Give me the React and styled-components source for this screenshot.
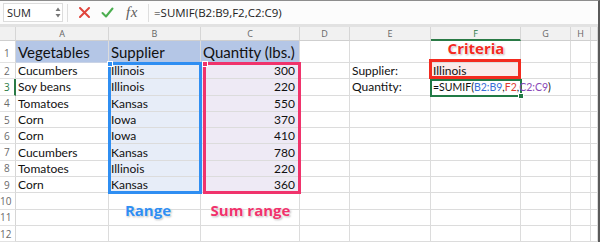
import React from 'react';
import styled, { createGlobalStyle, css } from 'styled-components';

const GlobalStyle = createGlobalStyle`
  html, body {
    margin: 0;
    padding: 0;
    background: #ffffff;
  }
  body {
    width: 600px;
    height: 242px;
    overflow: hidden;
    font-family: Lato, 'Open Sans', sans-serif;
  }
`;

const Frame = styled.div`
  width: 600px;
  height: 242px;
  box-sizing: border-box;
  border-top: 1px solid #8d8d8d;
  border-right: 2px solid #5a5a5a;
  display: flex;
  flex-direction: column;
  overflow: hidden;
`;

const Toolbar = styled.div`
  height: 23px;
  flex: none;
  display: flex;
  align-items: center;
  background: #fcfcfc;
  border-bottom: 3px solid #e2e2e2;
  padding-left: 3px;
`;

const NameBox = styled.div`
  width: 60px;
  height: 19px;
  box-sizing: border-box;
  border: 1px solid #dcdcdc;
  background: #ffffff;
  display: flex;
  align-items: center;
  justify-content: space-between;
  padding: 0 1px 0 3px;
  font-family: 'Open Sans', sans-serif;
  font-size: 11px;
  color: #222;
`;

const Divider = styled.div`
  width: 1px;
  height: 18px;
  background: #dedede;
  margin: 0 ${(p) => p.$gap || 0}px;
`;

const IconSlot = styled.div`
  width: ${(p) => p.$w}px;
  display: flex;
  align-items: center;
  justify-content: center;
`;

const Fx = styled.span`
  font-family: 'Liberation Serif', serif;
  font-style: italic;
  font-size: 15px;
  color: #5c5c5c;
  letter-spacing: 0.5px;
`;

const Formula = styled.span`
  font-family: 'Open Sans', sans-serif;
  font-size: 11.5px;
  color: #222;
  margin-left: 2px;
`;

const Sheet = styled.div`
  flex: 1;
  display: grid;
  grid-template-columns: 16px 93px 92px 99px 50px 81px 90px 50px 1fr;
  grid-template-rows: 14px 22px repeat(11, 16.3px);
`;

const placed = css`
  grid-column: ${(p) => p.$c};
  grid-row: ${(p) => p.$r};
`;

const ColHead = styled.div`
  ${placed};
  background: #f1f1f1;
  border-right: 1px solid #d6d6d6;
  border-bottom: 1px solid #cfcfcf;
  box-sizing: border-box;
  display: flex;
  align-items: center;
  justify-content: center;
  font-family: 'Open Sans', sans-serif;
  font-size: 9px;
  color: #666;
  ${(p) =>
    p.$active &&
    css`
      border-bottom: 2px solid #2a7a46;
      color: #2a7a46;
    `}
`;

const RowHead = styled.div`
  ${placed};
  border-right: 1px solid #d6d6d6;
  border-bottom: 1px solid #e2e2e2;
  box-sizing: border-box;
  display: flex;
  align-items: ${(p) => (p.$tall ? 'flex-end' : 'center')};
  padding-left: ${(p) => (p.$wide ? 0 : 4)}px;
  padding-bottom: ${(p) => (p.$tall ? 2 : 0)}px;
  font-family: 'Open Sans', sans-serif;
  font-size: 10px;
  color: #6a6a6a;
  ${(p) =>
    p.$active &&
    css`
      color: #2a7a46;
      border-right: 2px solid #2a7a46;
    `}
`;

const Cell = styled.div`
  ${placed};
  border-right: 1px solid #dcdcdc;
  border-bottom: 1px solid #dcdcdc;
  box-sizing: border-box;
  display: flex;
  align-items: center;
  justify-content: ${(p) => (p.$right ? 'flex-end' : 'flex-start')};
  padding: 0 4px 0 2px;
  background: ${(p) => p.$fill || '#ffffff'};
  font-size: ${(p) => (p.$big ? 15 : 12)}px;
  color: #111;
  white-space: nowrap;
  overflow: visible;
  ${(p) =>
    p.$big &&
    css`
      align-items: flex-end;
      padding-bottom: 1px;
      border-bottom-color: #c9d3e6;
    `}
`;

const RangeBox = styled.div`
  ${placed};
  border: ${(p) => p.$w || 3}px solid ${(p) => p.$color};
  margin: ${(p) => p.$margin || '-1px'};
  z-index: 2;
  pointer-events: none;
  position: relative;
`;

const Handle = styled.span`
  position: absolute;
  width: 4px;
  height: 4px;
  background: ${(p) => p.$color};
  border: 1px solid #fff;
  ${(p) => p.$corner};
`;

const FormulaCell = styled.div`
  ${placed};
  z-index: 3;
  display: flex;
  align-items: center;
  padding-left: 2px;
  font-family: Lato, sans-serif;
  font-size: 10.5px;
  white-space: nowrap;
  color: #111;
`;

const Ref = styled.span`
  color: ${(p) => p.$color};
`;

const Label = styled.div`
  ${placed};
  z-index: 4;
  align-self: ${(p) => p.$align || 'center'};
  justify-self: center;
  margin: ${(p) => p.$margin || 0};
  font-family: 'Open Sans', sans-serif;
  font-weight: 700;
  font-size: 15px;
  line-height: 16px;
  color: ${(p) => p.$color};
  text-shadow: 0 0 2px #fff, 0 0 2px #fff, 1px 1px 2px rgba(0, 0, 0, 0.35);
  white-space: nowrap;
`;

const columns = ['A', 'B', 'C', 'D', 'E', 'F', 'G', 'H', ''];

const data = [
  ['Cucumbers', 'Illinois', '300'],
  ['Soy beans', 'Illinois', '220'],
  ['Tomatoes', 'Kansas', '550'],
  ['Corn', 'Iowa', '370'],
  ['Corn', 'Iowa', '410'],
  ['Cucumbers', 'Kansas', '780'],
  ['Tomatoes', 'Illinois', '220'],
  ['Corn', 'Kansas', '360'],
];

const blueFill = '#e7edf8';
const pinkFill = '#eeeaf5';
const headFill = '#b4c6e6';

function rowCells(r) {
  // r is the sheet row number; grid row is r + 1, grid column is c + 2
  const cells = [];
  for (let c = 0; c < 9; c++) {
    let text = '';
    let fill;
    let right = false;
    if (r === 1) {
      text = ['Vegetables', 'Supplier', 'Quantity (lbs.)'][c] || '';
      if (c < 3) fill = headFill;
    } else if (r >= 2 && r <= 9) {
      const row = data[r - 2];
      if (c < 3) text = row[c];
      if (c === 1) fill = blueFill;
      if (c === 2) {
        fill = pinkFill;
        right = true;
      }
    }
    if (r === 2 && c === 4) text = 'Supplier:';
    if (r === 3 && c === 4) text = 'Quantity:';
    if (r === 2 && c === 5) {
      text = 'Illinois';
      fill = '#fbeaea';
    }
    cells.push(
      <Cell
        key={`${r}-${c}`}
        $r={r + 1}
        $c={c + 2}
        $fill={fill}
        $right={right}
        $big={r === 1 && c < 3}
      >
        {text}
      </Cell>
    );
  }
  return cells;
}

const CloseIcon = () => (
  <svg width="11" height="11" viewBox="0 0 11 11">
    <path d="M1 1 L10 10 M10 1 L1 10" stroke="#e0453c" strokeWidth="2" strokeLinecap="round" />
  </svg>
);

const CheckIcon = () => (
  <svg width="13" height="11" viewBox="0 0 13 11">
    <path d="M1.5 6 L5 9.5 L11.5 1.5" stroke="#4bae4f" strokeWidth="2" fill="none" strokeLinecap="round" strokeLinejoin="round" />
  </svg>
);

const Spinner = () => (
  <svg width="6" height="11" viewBox="0 0 6 11">
    <path d="M3 0.5 L5.5 4 L0.5 4 Z M3 10.5 L5.5 7 L0.5 7 Z" fill="#777" />
  </svg>
);

export default function App() {
  const rows = [];
  for (let r = 1; r <= 12; r++) {
    rows.push(
      <RowHead key={`h${r}`} $r={r + 1} $c={1} $tall={r === 1} $active={r === 3} $wide={r >= 10}>
        {r}
      </RowHead>
    );
    rows.push(...rowCells(r));
  }

  return (
    <>
      <GlobalStyle />
      <Frame>
        <Toolbar>
          <NameBox>
            SUM
            <Spinner />
          </NameBox>
          <Divider $gap={4} />
          <IconSlot $w={24}>
            <CloseIcon />
          </IconSlot>
          <IconSlot $w={23}>
            <CheckIcon />
          </IconSlot>
          <IconSlot $w={26}>
            <Fx>fx</Fx>
          </IconSlot>
          <Divider $gap={3} />
          <Formula>=SUMIF(B2:B9,F2,C2:C9)</Formula>
        </Toolbar>
        <Sheet>
          <ColHead $r={1} $c={1} />
          {columns.map((c, i) => (
            <ColHead key={`c${i}`} $r={1} $c={i + 2} $active={c === 'F'}>
              {c}
            </ColHead>
          ))}
          {rows}

          <RangeBox $c={3} $r="3 / 11" $color="#2f8ef2" $margin="-1px -1px -1px -1px">
            <Handle $color="#2f8ef2" $corner="top: -4px; left: -4px;" />
          </RangeBox>
          <RangeBox $c={4} $r="3 / 11" $color="#f0336c" $margin="-1px -1px -1px 2px">
            <Handle $color="#f0336c" $corner="top: -4px; left: -4px;" />
          </RangeBox>
          <RangeBox $c={7} $r={3} $color="#f32a1f" $margin="-4px 0 0 -2px" />
          <RangeBox $c={7} $r={4} $color="#217a45" $w={2} $margin="0 -1px -1px -1px">
            <Handle $color="#217a45" $corner="bottom: -4px; right: -4px;" />
          </RangeBox>

          <FormulaCell $c={7} $r={4}>
            =SUMIF(<Ref $color="#3a6fd6">B2:B9</Ref>,<Ref $color="#e03b2f">F2</Ref>,
            <Ref $color="#8a47b8">C2:C9</Ref>)
          </FormulaCell>

          <Label $c={7} $r={2} $color="#f32a1f" $align="start" $margin="-1px 0 0 0">
            Criteria
          </Label>
          <Label $c={3} $r="11 / 13" $color="#2f8ef2" $margin="0 14px 0 0">
            Range
          </Label>
          <Label $c={4} $r="11 / 13" $color="#f0336c">
            Sum range
          </Label>
        </Sheet>
      </Frame>
    </>
  );
}
